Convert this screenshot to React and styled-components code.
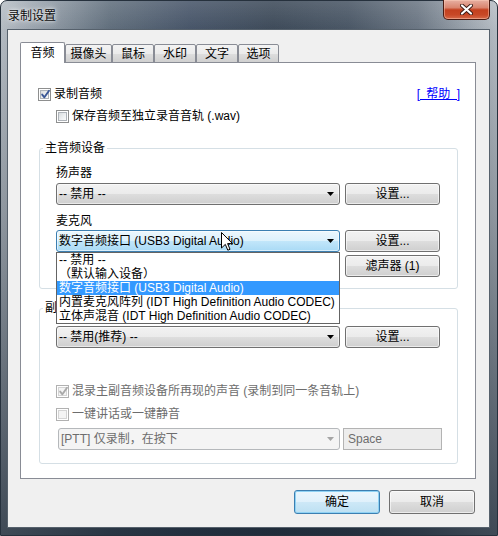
import React from 'react';
import styled, { createGlobalStyle } from 'styled-components';

const FONT = `"Liberation Sans", "Noto Sans CJK SC", sans-serif`;

const GlobalStyle = createGlobalStyle`
  html, body { margin: 0; padding: 0; background: #fff; }
  body { font-family: ${FONT}; font-size: 12px; color: #000; }
  * { box-sizing: border-box; }
`;

const Window = styled.div`
  position: relative;
  width: 498px;
  height: 536px;
  display: flex;
  flex-direction: column;
  padding: 0 7px 7px 6px;
  border: 1px solid #26313d;
  border-radius: 7px 7px 0 0;
  background:
    linear-gradient(180deg, rgba(255,255,255,0.12) 0px, rgba(255,255,255,0) 30px),
    linear-gradient(180deg, rgba(20,30,42,0) 0%, rgba(20,30,42,0.25) 40%, rgba(22,34,48,0.75) 100%),
    linear-gradient(90deg, #b9c0c7 0%, #98a2ac 8%, #62707e 22%, #48566a 38%, #3e4b5a 55%, #4a5766 70%, #6d7885 84%, #9ea7b0 94%, #b9c0c7 100%);
`;

const TitleBar = styled.div`
  height: 28px;
  display: flex;
  align-items: flex-start;
`;

const Title = styled.div`
  padding-left: 1px;
  margin-top: 7px;
  font-size: 12px;
  line-height: 16px;
  color: #0b0b0b;
  text-shadow: 0 0 6px rgba(255,255,255,0.95), 0 0 3px rgba(255,255,255,0.8);
`;

const CloseButton = styled.div`
  margin-left: auto;
  margin-top: -1px;
  width: 47px;
  height: 20px;
  display: flex;
  align-items: center;
  justify-content: center;
  border: 1px solid #4a1b12;
  border-top: none;
  border-radius: 0 0 5px 5px;
  background: linear-gradient(180deg, #e7b0a2 0%, #d9856f 40%, #c3401f 52%, #c84826 78%, #d66a4a 100%);
  box-shadow: inset 0 0 0 1px rgba(255,210,190,0.45);
`;

const Client = styled.div`
  flex: 1;
  display: flex;
  flex-direction: column;
  padding: 12px 13px 0 12px;
  background: #f0f0f0;
  border: 1px solid #56616c;
`;

const TabRow = styled.div`
  position: relative;
  z-index: 1;
  display: flex;
  align-items: flex-end;
  height: 21px;
  margin-bottom: -1px;
`;

const Tab = styled.div`
  width: ${p => p.$w}px;
  height: ${p => (p.$active ? 21 : 19)}px;
  display: flex;
  align-items: center;
  justify-content: center;
  padding-bottom: ${p => (p.$active ? 1 : 0)}px;
  border: 1px solid #898c95;
  border-bottom: ${p => (p.$active ? 'none' : '1px solid #898c95')};
  border-radius: 2px 2px 0 0;
  background: ${p => (p.$active ? '#fff' : 'linear-gradient(180deg, #f3f3f3 0%, #ebebeb 50%, #dedede 52%, #d0d0d0 100%)')};
  font-size: 12px;
  line-height: 14px;
`;

const Panel = styled.div`
  display: flex;
  flex-direction: column;
  padding: 23px 15px 14px 17px;
  background: #fff;
  border: 1px solid #898c95;
`;

const TopRow = styled.div`
  display: flex;
  justify-content: space-between;
  align-items: center;
  height: 16px;
`;

const CheckRow = styled.label`
  display: flex;
  align-items: center;
  gap: 3px;
  height: 16px;
  margin-top: ${p => p.$mt || 0}px;
  margin-left: ${p => p.$ml || 0}px;
  line-height: 14px;
  color: ${p => (p.$dim ? '#6d6d6d' : '#000')};
  white-space: nowrap;
`;

const BoxOuter = styled.span`
  flex: none;
  width: 13px;
  height: 13px;
  padding: 1px;
  border: 1px solid ${p => (p.$disabled ? '#b1b1b1' : '#8e8f8f')};
  background: #fff;
  position: relative;
`;

const BoxInner = styled.span`
  display: block;
  width: 9px;
  height: 9px;
  border: 1px solid ${p => (p.$disabled ? '#d4d4d4' : '#aeb3b9')};
  background: ${p => (p.$disabled ? '#f4f4f4' : 'linear-gradient(135deg, #d9dcdf 0%, #eef0f1 60%, #fafafa 100%)')};
`;

const CheckMark = styled.svg`
  position: absolute;
  left: 1px;
  top: 0px;
`;

const HelpLink = styled.a`
  color: #0000ff;
  text-decoration: underline;
  line-height: 14px;
  white-space: pre;
  word-spacing: 3px;
  cursor: pointer;
`;

const Group = styled.fieldset`
  margin: ${p => p.$mt}px 2px 0 1px;
  padding: 0;
  min-width: 0;
  border: 1px solid #d5dfe5;
  border-radius: 3px;
`;

const Legend = styled.legend`
  margin-left: 3px;
  padding: 0 2px;
  font-size: 12px;
  line-height: 14px;
`;

const GroupBody = styled.div`
  display: flex;
  flex-direction: column;
  padding: 0 17px ${p => p.$pb}px 16px;
`;

const FieldLabel = styled.div`
  line-height: 14px;
  margin-top: ${p => p.$mt}px;
`;

const ControlRow = styled.div`
  display: flex;
  gap: ${p => (p.$gap != null ? p.$gap : 5)}px;
  justify-content: ${p => (p.$end ? 'flex-end' : 'flex-start')};
  margin-top: ${p => p.$mt || 0}px;
  margin-left: ${p => p.$ml || 0}px;
  margin-right: ${p => p.$mr || 0}px;
  position: relative;
  z-index: ${p => p.$z || 0};
`;

const SelectWrap = styled.div`
  position: relative;
  width: ${p => p.$w}px;
  flex: none;
`;

const Select = styled.div`
  display: flex;
  align-items: center;
  height: 22px;
  padding: 0 5px 0 2px;
  border: 1px solid ${p => (p.$active ? '#3c7fb1' : p.$disabled ? '#b5b8bb' : '#707070')};
  border-radius: 3px;
  background: ${p =>
    p.$active
      ? 'linear-gradient(180deg, #ecf7fd 0%, #dcf1fc 50%, #c1e6fa 52%, #a9daf5 100%)'
      : p.$disabled
      ? '#f4f4f4'
      : 'linear-gradient(180deg, #f2f2f2 0%, #ebebeb 50%, #dddddd 52%, #cfcfcf 100%)'};
  box-shadow: ${p => (p.$disabled ? 'none' : 'inset 0 0 0 1px rgba(255,255,255,0.55)')};
  color: ${p => (p.$disabled ? '#6d6d6d' : '#000')};
  line-height: 14px;
  white-space: nowrap;
`;

const SelectText = styled.span`
  flex: 1;
  overflow: hidden;
`;

const Arrow = styled.svg`
  flex: none;
  margin-left: 4px;
`;

const DropList = styled.div`
  position: absolute;
  top: 100%;
  left: 0;
  right: 0;
  z-index: 10;
  background: #fff;
  border: 1px solid #646464;
`;

const DropItem = styled.div`
  height: 14px;
  line-height: 14px;
  padding-left: 2px;
  overflow: hidden;
  white-space: nowrap;
  background: ${p => (p.$sel ? '#3399ff' : 'transparent')};
  color: ${p => (p.$sel ? '#fff' : '#000')};
`;

const Cursor = styled.svg`
  position: absolute;
  left: 165px;
  top: 2px;
  z-index: 11;
`;

const Button = styled.button`
  flex: none;
  width: ${p => p.$w || 95}px;
  height: ${p => p.$h || 22}px;
  padding: 0;
  font-family: ${FONT};
  font-size: 12px;
  line-height: 14px;
  color: #000;
  border: 1px solid ${p => (p.$default ? '#3c7fb1' : '#707070')};
  border-radius: 3px;
  background: ${p =>
    p.$default
      ? 'linear-gradient(180deg, #eaf6fd 0%, #e0f1fb 50%, #cde8f7 52%, #bde0f2 100%)'
      : 'linear-gradient(180deg, #f2f2f2 0%, #ebebeb 50%, #dddddd 52%, #cfcfcf 100%)'};
  box-shadow: ${p => (p.$default ? 'inset 0 0 0 1px #8fd2f4' : 'inset 0 0 0 1px rgba(255,255,255,0.6)')};
`;

const TextBox = styled.div`
  flex: none;
  width: ${p => p.$w}px;
  height: 22px;
  display: flex;
  align-items: center;
  padding-left: 4px;
  border: 1px solid #b3b3b3;
  background: #ededed;
  color: #6d6d6d;
  line-height: 14px;
`;

const Footer = styled.div`
  display: flex;
  justify-content: flex-end;
  gap: 9px;
  margin-top: 11px;
  padding-right: 1px;
`;

function CheckBox({ checked, disabled }) {
  return (
    <BoxOuter $disabled={disabled}>
      <BoxInner $disabled={disabled} />
      {checked && (
        <CheckMark width="11" height="11" viewBox="0 0 11 11">
          <path
            d="M2.2 5.6 L4.4 8.3 L9 1.8"
            fill="none"
            stroke={disabled ? '#a9a9a9' : '#3a5796'}
            strokeWidth="1.9"
            strokeLinecap="round"
            strokeLinejoin="round"
          />
        </CheckMark>
      )}
    </BoxOuter>
  );
}

function DownArrow({ disabled }) {
  return (
    <Arrow width="7" height="4" viewBox="0 0 7 4">
      <path d="M0 0 H7 L3.5 4 Z" fill={disabled ? '#a5a5a5' : '#000'} />
    </Arrow>
  );
}

const tabs = [
  { t: '音频', w: 45, active: true },
  { t: '摄像头', w: 47 },
  { t: '鼠标', w: 42 },
  { t: '水印', w: 42 },
  { t: '文字', w: 42 },
  { t: '选项', w: 41 },
];

const micItems = [
  '-- 禁用 --',
  '（默认输入设备）',
  '数字音频接口 (USB3 Digital Audio)',
  '内置麦克风阵列 (IDT High Definition Audio CODEC)',
  '立体声混音 (IDT High Definition Audio CODEC)',
];

export default function App() {
  return (
    <>
      <GlobalStyle />
      <Window>
        <TitleBar>
          <Title>录制设置</Title>
          <CloseButton>
            <svg width="13" height="11" viewBox="0 0 13 11">
              <path d="M2 1.5 L11 9.5 M11 1.5 L2 9.5" stroke="#3a1a14" strokeWidth="4" strokeLinecap="round" />
              <path d="M2 1.5 L11 9.5 M11 1.5 L2 9.5" stroke="#ffffff" strokeWidth="2.2" strokeLinecap="round" />
            </svg>
          </CloseButton>
        </TitleBar>
        <Client>
          <TabRow>
            {tabs.map(tab => (
              <Tab key={tab.t} $w={tab.w} $active={tab.active}>
                {tab.t}
              </Tab>
            ))}
          </TabRow>
          <Panel>
            <TopRow>
              <CheckRow>
                <CheckBox checked />
                录制音频
              </CheckRow>
              <HelpLink>[ 帮助 ]</HelpLink>
            </TopRow>
            <CheckRow $mt={6} $ml={18}>
              <CheckBox />
              保存音频至独立录音音轨 (.wav)
            </CheckRow>

            <Group $mt={17}>
              <Legend>主音频设备</Legend>
              <GroupBody $pb={11}>
                <FieldLabel $mt={11}>扬声器</FieldLabel>
                <ControlRow $mt={3}>
                  <SelectWrap $w={284}>
                    <Select>
                      <SelectText>-- 禁用 --</SelectText>
                      <DownArrow />
                    </Select>
                  </SelectWrap>
                  <Button>设置...</Button>
                </ControlRow>
                <FieldLabel $mt={9}>麦克风</FieldLabel>
                <ControlRow $mt={2} $z={5}>
                  <SelectWrap $w={284}>
                    <Select $active>
                      <SelectText>数字音频接口 (USB3 Digital Audio)</SelectText>
                      <DownArrow />
                    </Select>
                    <DropList>
                      {micItems.map((it, i) => (
                        <DropItem key={i} $sel={i === 2}>
                          {it}
                        </DropItem>
                      ))}
                    </DropList>
                    <Cursor width="12" height="19" viewBox="0 0 12 19">
                      <path
                        d="M0.5 0.5 L0.5 16 L4.3 12.4 L6.8 18.2 L9 17.3 L6.6 11.6 L11.5 11.6 Z"
                        fill="#fff"
                        stroke="#000"
                        strokeWidth="1"
                        strokeLinejoin="round"
                      />
                    </Cursor>
                  </SelectWrap>
                  <Button>设置...</Button>
                </ControlRow>
                <ControlRow $mt={3} $end>
                  <Button>滤声器 (1)</Button>
                </ControlRow>
              </GroupBody>
            </Group>

            <Group $mt={12}>
              <Legend>副音频设备</Legend>
              <GroupBody $pb={13}>
                <ControlRow $mt={11}>
                  <SelectWrap $w={284}>
                    <Select>
                      <SelectText>-- 禁用(推荐) --</SelectText>
                      <DownArrow />
                    </Select>
                  </SelectWrap>
                  <Button>设置...</Button>
                </ControlRow>
                <CheckRow $mt={35} $dim>
                  <CheckBox checked disabled />
                  混录主副音频设备所再现的声音 (录制到同一条音轨上)
                </CheckRow>
                <CheckRow $mt={7} $dim>
                  <CheckBox disabled />
                  一键讲话或一键静音
                </CheckRow>
                <ControlRow $mt={6} $ml={2} $mr={-2} $gap={3}>
                  <SelectWrap $w={282}>
                    <Select $disabled>
                      <SelectText>[PTT] 仅录制，在按下</SelectText>
                      <DownArrow disabled />
                    </Select>
                  </SelectWrap>
                  <TextBox $w={99}>Space</TextBox>
                </ControlRow>
              </GroupBody>
            </Group>
          </Panel>
          <Footer>
            <Button $default $w={86} $h={24}>确定</Button>
            <Button $w={86} $h={24}>取消</Button>
          </Footer>
        </Client>
      </Window>
    </>
  );
}
